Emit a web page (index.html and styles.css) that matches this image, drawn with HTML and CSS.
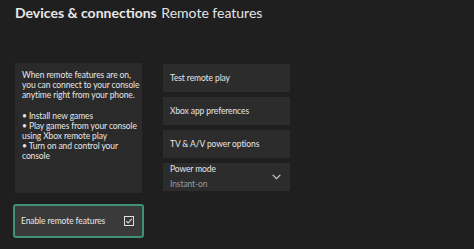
FILE: index.html
```html
<!DOCTYPE html>
<html>
<head>
<meta charset="utf-8">
<link rel="stylesheet" href="styles.css">
</head>
<body>
<div class="header">
  <span class="crumb-main">Devices &amp; connections</span>
  <span class="crumb-sub">Remote features</span>
</div>
<div class="main">
  <div class="left">
    <div class="info">
      <p>When remote features are on,<br>you can connect to your console<br>anytime right from your phone.</p>
      <p>• Install new games<br>• Play games from your console<br>using Xbox remote play<br>• Turn on and control your<br>console</p>
    </div>
    <div class="enable">
      <span>Enable remote features</span>
      <span class="check">
        <svg width="10" height="10" viewBox="0 0 10 10"><rect x="0.5" y="0.5" width="9" height="9" fill="none" stroke="#e0e0e0" stroke-width="1"/><path d="M2.3 5.2 L4.1 7 L7.8 2.8" fill="none" stroke="#e0e0e0" stroke-width="1.1"/></svg>
      </span>
    </div>
  </div>
  <div class="right">
    <div class="tile">Test remote play</div>
    <div class="tile">Xbox app preferences</div>
    <div class="tile">TV &amp; A/V power options</div>
    <div class="tile tile-select">
      <div class="sel-text">
        <div>Power mode</div>
        <div class="sel-value">Instant-on</div>
      </div>
      <svg class="chev" width="9" height="6" viewBox="0 0 9 6"><path d="M0.7 0.8 L4.5 4.6 L8.3 0.8" fill="none" stroke="#cfcfcf" stroke-width="1.2"/></svg>
    </div>
  </div>
</div>
</body>
</html>
```
FILE: styles.css
```css
html, body {
  margin: 0;
  padding: 0;
  background: #1f1f1f;
  color: #e8e8e8;
  font-family: Lato, "Noto Sans", sans-serif;
  width: 474px;
  height: 249px;
  overflow: hidden;
}
.header {
  padding: 0 0 0 15px;
  height: 25px;
  font-size: 14px;
  line-height: 25px;
  white-space: nowrap;
}
.crumb-main {
  font-weight: 700;
}
.crumb-sub {
  font-weight: 400;
  margin-left: 1px;
  color: #e4e4e4;
}
.main {
  display: flex;
  margin-top: 38px;
  padding-left: 15px;
  gap: 21px;
}
.left {
  width: 127px;
  display: flex;
  flex-direction: column;
}
.info {
  background: #2a2a2a;
  height: 130px;
  box-sizing: border-box;
  padding: 7px 0 0 7px;
  font-size: 8.5px;
  line-height: 10.2px;
  color: #e6e6e6;
  white-space: nowrap;
  letter-spacing: -0.1px;
}
.info p {
  margin: 0 0 10px 0;
}
.enable {
  margin: 11px -2px 0 -2px;
  height: 34px;
  box-sizing: border-box;
  border: 2px solid #3f9178;
  border-radius: 3px;
  background: #3a3a3a;
  display: flex;
  align-items: center;
  justify-content: space-between;
  padding: 0 8px 0 6px;
  font-size: 8.5px;
  letter-spacing: -0.1px;
  color: #e6e6e6;
}
.check {
  display: flex;
}
.right {
  width: 127px;
  display: flex;
  flex-direction: column;
  gap: 5px;
  padding-top: 1px;
}
.tile {
  height: 28px;
  background: #2c2c2c;
  box-sizing: border-box;
  padding: 0 7px;
  display: flex;
  align-items: center;
  font-size: 8.5px;
  letter-spacing: -0.1px;
  color: #e6e6e6;
}
.tile-select {
  justify-content: space-between;
}
.sel-text {
  display: flex;
  flex-direction: column;
  line-height: 11px;
}
.sel-value {
  color: #9a9a9a;
  margin-top: 4px;
}
.chev {
  margin-right: 2px;
}
```
